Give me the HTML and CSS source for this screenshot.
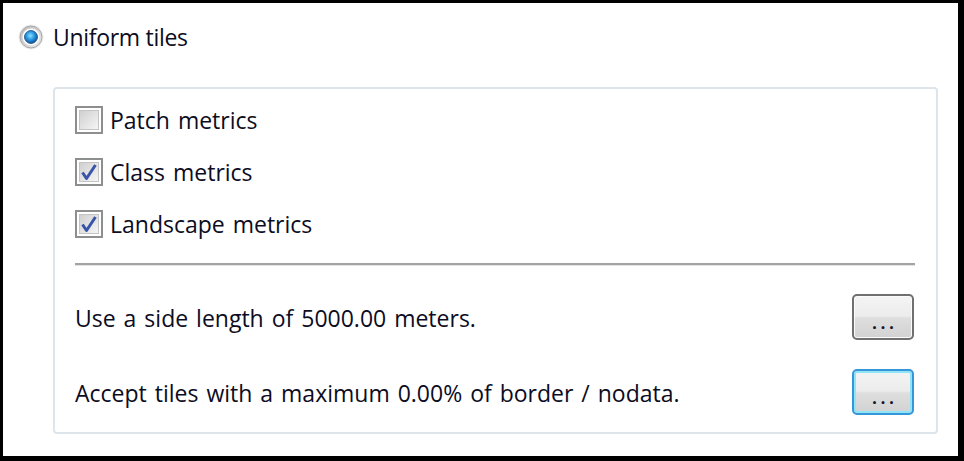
FILE: index.html
```html
<!DOCTYPE html>
<html>
<head>
<meta charset="utf-8">
<link rel="stylesheet" href="styles.css">
</head>
<body>
<div class="frame">
  <div class="radio-row">
    <svg class="radio" width="28" height="28" viewBox="0 0 28 28">
      <defs>
        <linearGradient id="rg" x1="0" y1="0" x2="1" y2="1">
          <stop offset="0" stop-color="#b9b9b9"/>
          <stop offset="1" stop-color="#ececec"/>
        </linearGradient>
        <radialGradient id="dot" cx="0.45" cy="0.4" r="0.6">
          <stop offset="0" stop-color="#8be0ff"/>
          <stop offset="0.5" stop-color="#2b9be0"/>
          <stop offset="1" stop-color="#0d4f9a"/>
        </radialGradient>
      </defs>
      <circle cx="14" cy="14" r="12.5" fill="#eeeeee"/>
      <circle cx="14" cy="14" r="11" fill="url(#rg)" stroke="#a8a8a8" stroke-width="1"/>
      <circle cx="14" cy="14" r="8.5" fill="#ffffff"/>
      <circle cx="14" cy="14" r="6.5" fill="url(#dot)" stroke="#1b4f88" stroke-width="0.8"/>
    </svg>
    <span class="label">Uniform tiles</span>
  </div>

  <div class="group">
    <div class="checks">
      <div class="check-row">
        <svg class="cb" width="28" height="28" viewBox="0 0 28 28">
          <defs>
            <linearGradient id="cg" x1="0" y1="0" x2="1" y2="1">
              <stop offset="0" stop-color="#cfcfcf"/>
              <stop offset="1" stop-color="#f6f6f6"/>
            </linearGradient>
          </defs>
          <rect x="1" y="1" width="26" height="26" fill="#ffffff" stroke="#8d8e8e" stroke-width="2"/>
          <rect x="4.5" y="4.5" width="19" height="19" fill="url(#cg)" stroke="#c4c4c4" stroke-width="1"/>
        </svg>
        <span class="label">Patch metrics</span>
      </div>
      <div class="check-row">
        <svg class="cb" width="28" height="28" viewBox="0 0 28 28">
          <rect x="1" y="1" width="26" height="26" fill="#ffffff" stroke="#8d8e8e" stroke-width="2"/>
          <rect x="4.5" y="4.5" width="19" height="19" fill="url(#cg)" stroke="#c4c4c4" stroke-width="1"/>
          <path d="M7.5 14.5 L11.5 20.5 L20.5 7" stroke="#3a55a8" stroke-width="3" fill="none" stroke-linejoin="round"/>
        </svg>
        <span class="label">Class metrics</span>
      </div>
      <div class="check-row">
        <svg class="cb" width="28" height="28" viewBox="0 0 28 28">
          <rect x="1" y="1" width="26" height="26" fill="#ffffff" stroke="#8d8e8e" stroke-width="2"/>
          <rect x="4.5" y="4.5" width="19" height="19" fill="url(#cg)" stroke="#c4c4c4" stroke-width="1"/>
          <path d="M7.5 14.5 L11.5 20.5 L20.5 7" stroke="#3a55a8" stroke-width="3" fill="none" stroke-linejoin="round"/>
        </svg>
        <span class="label">Landscape metrics</span>
      </div>
    </div>
    <div class="sep"></div>
    <div class="opt-row">
      <span class="label">Use a side length of 5000.00 meters.</span>
      <button class="btn">...</button>
    </div>
    <div class="opt-row">
      <span class="label">Accept tiles with a maximum 0.00% of border / nodata.</span>
      <button class="btn btn-focus">...</button>
    </div>
  </div>
</div>
</body>
</html>
```

FILE: styles.css
```css
html, body {
  margin: 0;
  padding: 0;
  background: #000;
}
body {
  width: 964px;
  height: 461px;
  overflow: hidden;
  font-family: "Open Sans", "Noto Sans", sans-serif;
  font-size: 23px;
  color: #0c0c22;
}
.frame {
  margin: 3px 6px 5px 3px;
  height: 453px;
  background: #fff;
  padding-top: 20px;
  box-sizing: border-box;
}
.radio-row {
  display: flex;
  align-items: center;
  height: 28px;
  margin-left: 14px;
  gap: 8px;
}
.radio {
  display: block;
  flex: none;
}
.label {
  white-space: nowrap;
  line-height: 28px;
  word-spacing: 2px;
}
.radio-row .label {
  word-spacing: 0;
  letter-spacing: -0.3px;
}
.group {
  margin: 36px 20px 0 50px;
  height: 347px;
  box-sizing: border-box;
  border: 2px solid #dde4ea;
  border-radius: 4px;
  padding: 17px 21px 0 20px;
}
.checks {
  display: flex;
  flex-direction: column;
  gap: 24px;
}
.check-row {
  display: flex;
  align-items: center;
  height: 28px;
  gap: 7px;
}
.cb {
  display: block;
  flex: none;
}
.sep {
  height: 2px;
  background: #a3a3a3;
  border-bottom: 1px solid #e4e4e4;
  margin-top: 25px;
  margin-bottom: 28px;
}
.opt-row {
  display: flex;
  align-items: center;
  justify-content: space-between;
  height: 46px;
  margin-bottom: 29px;
}
.opt-row .label {
  padding-top: 2px;
}
.btn {
  width: 62px;
  height: 46px;
  box-sizing: border-box;
  border: 2px solid #707070;
  border-radius: 5px;
  background: linear-gradient(#f4f4f4 0%, #ececec 48%, #dedede 52%, #d2d2d2 100%);
  box-shadow: inset 0 0 0 1px #fbfbfb;
  font-family: "Open Sans", sans-serif;
  font-size: 20px;
  font-weight: 600;
  letter-spacing: 3px;
  color: #141428;
  padding: 10px 0 0 3px;
  line-height: 24px;
  margin-right: 1px;
}
.btn-focus {
  border-color: #3597d6;
  box-shadow: inset 0 0 0 2px #8fe4fa;
}
```
